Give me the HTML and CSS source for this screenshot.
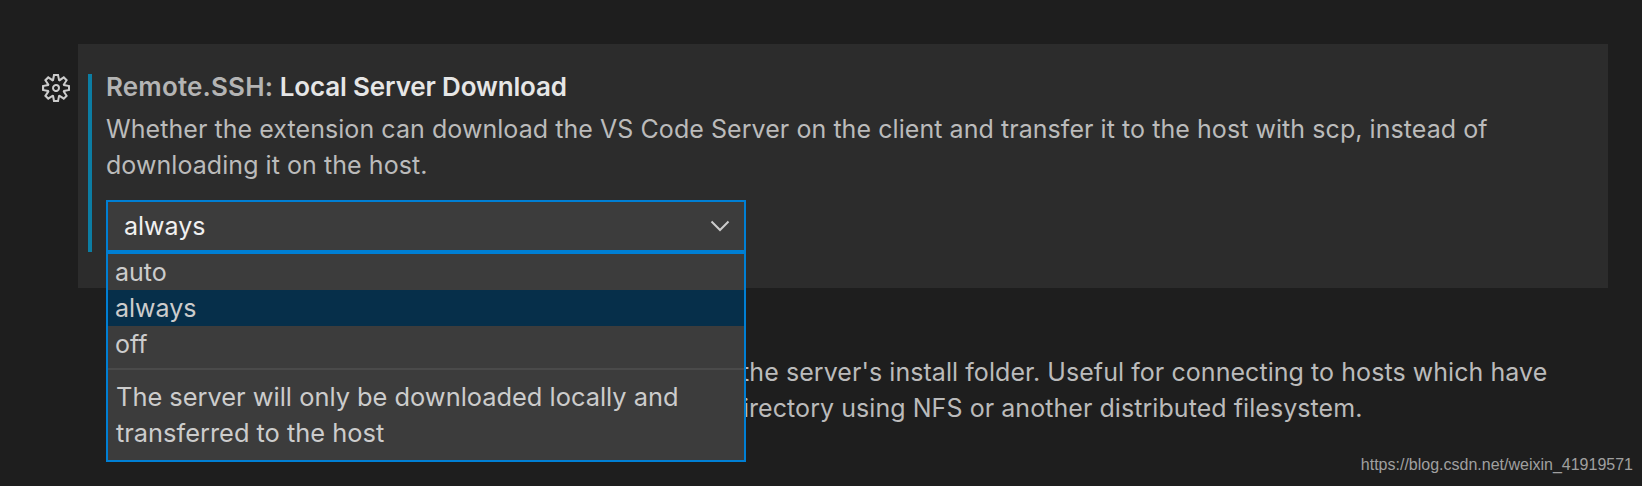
FILE: index.html
```html
<!DOCTYPE html>
<html lang="en">
<head>
<meta charset="utf-8">
<title>Settings</title>
<link rel="stylesheet" href="styles.css">
</head>
<body>
<main class="settings">
  <section class="setting is-focused">
    <div class="gutter">
      <svg class="gear" viewBox="0 0 24 24" aria-hidden="true"><path fill-rule="evenodd" d="M19.85 8.75l4.15.83v4.84l-4.15.83 2.35 3.52-3.43 3.43-3.52-2.35-.83 4.15H9.58l-.83-4.15-3.52 2.35-3.43-3.43 2.35-3.52L0 14.42V9.58l4.15-.83L1.8 5.23 5.23 1.8l3.52 2.35L9.58 0h4.84l.83 4.15 3.52-2.35 3.43 3.43-2.35 3.52zm-1.57 5.07l4-.81v-2l-4-.81-.54-1.3 2.29-3.43-1.43-1.43-3.43 2.29-1.3-.54-.81-4h-2l-.81 4-1.3.54-3.43-2.29-1.43 1.43L6.38 8.9l-.54 1.3-4 .81v2l4 .81.54 1.3-2.29 3.43 1.43 1.43 3.43-2.29 1.3.54.81 4h2l.81-4 1.3-.54 3.43 2.29 1.43-1.43-2.29-3.43.54-1.3zm-8.186-4.672A3.43 3.43 0 0 1 12 8.57 3.44 3.44 0 0 1 15.43 12a3.43 3.43 0 1 1-5.336-2.852zm.956 4.274c.281.188.612.288.95.288A1.7 1.7 0 0 0 13.71 12a1.71 1.71 0 1 0-2.66 1.422z"/></svg>
    </div>
    <div class="panel">
      <div class="accent">
        <h2 class="title"><span class="title-prefix">Remote.SSH:</span> <strong>Local Server Download</strong></h2>
        <p class="desc">Whether the extension can download the VS Code Server on the client and transfer it to the host with scp, instead of downloading it on the host.</p>
        <div class="select">
          <div class="select-box">
            <span>always</span>
            <svg class="chevron" viewBox="0 0 20 12" aria-hidden="true"><path d="M1.5 1.500 10 10l8.500-8.500"/></svg>
          </div>
          <div class="dropdown">
            <div class="option">auto</div>
            <div class="option is-selected">always</div>
            <div class="option">off</div>
            <div class="option-desc">The server will only be downloaded locally and transferred to the host</div>
          </div>
        </div>
      </div>
    </div>
  </section>
  <section class="setting">
    <div class="gutter"></div>
    <div class="panel-plain">
      <p class="desc">Whether or not to make lockfiles in /tmp instead of in the server's install folder. Useful for connecting to hosts which have issues with file locking when they mount their home directory using NFS or another distributed filesystem.</p>
    </div>
  </section>
</main>
<div class="watermark">https://blog.csdn.net/weixin_41919571</div>
</body>
</html>
```

FILE: styles.css
```css
* { box-sizing: border-box; }
html, body { margin: 0; height: 100%; }
body {
  position: relative;
  overflow: hidden;
  background: #1e1e1e;
  color: #bbbbbb;
  font-family: Inter, "Liberation Sans", sans-serif;
}
.settings { padding-top: 44px; width: 1608px; }
.setting { display: flex; }
.gutter { width: 78px; flex: none; padding: 30px 0 0 42px; }
.gear { display: block; width: 28px; height: 28px; fill: #cccccc; }
.panel { flex: 1; height: 244px; background: #2c2c2c; padding: 30px 0 0 10px; }
.accent { height: 178px; border-left: 4px solid #0c7da3; padding-left: 14px; }
.title {
  margin: 0;
  font-size: 26px;
  line-height: 26px;
  font-weight: 600;
  color: #b4b4b4;
}
.title-prefix { letter-spacing: 0.17px; }
.title strong { font-weight: 600; color: #e6e6e6; letter-spacing: -0.15px; }
.desc { margin: 0; max-width: 1460px; font-size: 25px; letter-spacing: 0.06px; line-height: 36px; color: #bbbbbb; }
.accent .desc { margin-top: 11px; }
.select { position: relative; width: 640px; margin-top: 17px; }
.select-box {
  display: flex;
  align-items: center;
  justify-content: space-between;
  height: 52px;
  padding: 0 14px 0 16px;
  background: #3c3c3c;
  border: 2px solid #007fd4;
  color: #f0f0f0;
  font-size: 25px;
}
.chevron { width: 20px; height: 12px; fill: none; stroke: #cccccc; stroke-width: 2; }
.dropdown {
  position: absolute;
  z-index: 2;
  top: 52px;
  left: 0;
  width: 640px;
  height: 210px;
  background: #3c3c3c;
  border: 2px solid #007fd4;
  color: #cccccc;
  font-size: 25px;
}
.option { height: 36px; padding-left: 7px; line-height: 36px; }
.option.is-selected { background: #062f4a; }
.option-desc {
  margin-top: 6px;
  padding: 9px 8px;
  border-top: 2px solid #4a4a4a;
  font-size: 25.4px;
  line-height: 36px;
}
.panel-plain { flex: 1; padding: 66px 0 0 28px; }
.watermark {
  position: absolute;
  right: 9px;
  bottom: 12px;
  font-family: "Liberation Sans", Arial, sans-serif;
  font-size: 16px;
  color: #a0a0a0;
}
```
